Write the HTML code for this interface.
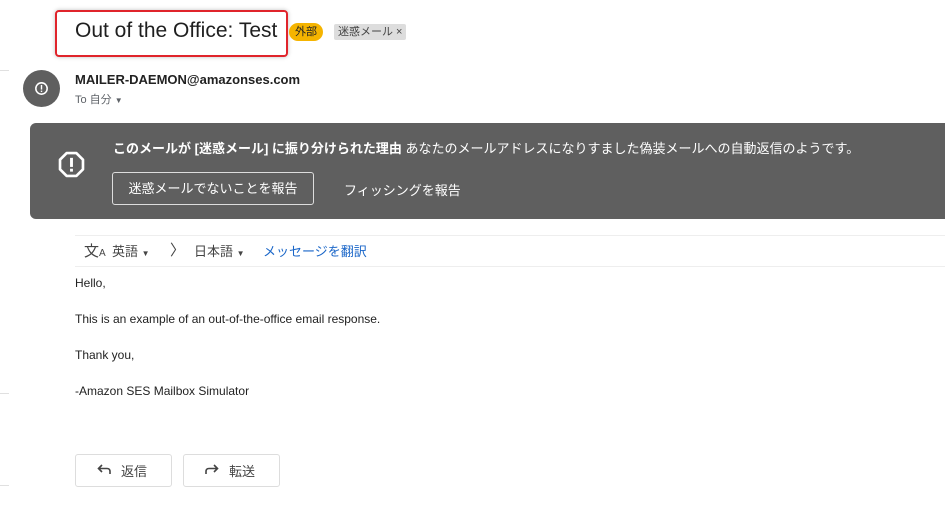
<!DOCTYPE html>
<html><head><meta charset="utf-8"><style>
body{margin:0;width:945px;height:508px;background:#fff;position:relative;overflow:hidden;font-family:"Liberation Sans","Noto Sans CJK JP",sans-serif;color:#222}
.a{position:absolute;white-space:nowrap}
.ln{position:absolute;left:0;width:9px;height:1px;background:#e0e0e0}
</style></head><body>
<div class="a" style="left:55px;top:10px;width:229px;height:43px;border:2px solid #e0242b;border-radius:4px;box-shadow:0 0 4px rgba(0,0,0,.25)"></div>
<div class="a" style="left:75px;top:19px;font-size:21px;color:#1f1f1f">Out of the Office: Test</div>
<div class="a" style="left:289px;top:23px;height:18px;padding:0 6px;border-radius:9px;background:#f5b400;font-size:11px;line-height:18px;color:#222">外部</div>
<div class="a" style="left:334px;top:24px;height:16px;padding:0 4px;border-radius:2px;background:#ddd;font-size:11px;line-height:16px;color:#444">迷惑メール ×</div>
<div class="ln" style="top:70px"></div><div class="ln" style="top:393px"></div><div class="ln" style="top:485px"></div>
<div class="a" style="left:23px;top:70px;width:37px;height:37px;border-radius:50%;background:#5f5f5f"></div>
<svg class="a" style="left:33px;top:80px" width="17" height="17" viewBox="0 0 24 24"><circle cx="12" cy="12" r="8" fill="none" stroke="#fff" stroke-width="2.2"/><rect x="11" y="7" width="2" height="6.5" fill="#fff"/><rect x="11" y="15" width="2" height="2" fill="#fff"/></svg>
<div class="a" style="left:75px;top:72px;font-size:13px;font-weight:bold;color:#222">MAILER-DAEMON@amazonses.com</div>
<div class="a" style="left:75px;top:91px;font-size:11px;color:#5f6368">To 自分 <span style="font-size:8px">▼</span></div>
<div class="a" style="left:30px;top:123px;width:930px;height:96px;background:#5f5f5f;border-radius:6px"></div>
<svg class="a" style="left:57px;top:150px" width="29" height="29" viewBox="0 0 24 24"><path d="M8 2.5h8l5.5 5.5v8L16 21.5H8L2.5 16V8z" fill="none" stroke="#fff" stroke-width="2.2" stroke-linejoin="round"/><rect x="10.8" y="6.5" width="2.4" height="7.5" fill="#fff"/><rect x="10.8" y="15.5" width="2.4" height="2.4" fill="#fff"/></svg>
<div class="a" style="left:113px;top:138px;font-size:13px;color:#fff"><b>このメールが [迷惑メール] に振り分けられた理由</b> あなたのメールアドレスになりすました偽装メールへの自動返信のようです。</div>
<div class="a" style="left:112px;top:172px;width:200px;height:31px;border:1px solid #ddd;border-radius:3px;font-size:13px;color:#fff;line-height:31px;text-align:center">迷惑メールでないことを報告</div>
<div class="a" style="left:344px;top:180px;font-size:13px;color:#fff">フィッシングを報告</div>
<div class="a" style="left:75px;top:235px;width:870px;height:1px;background:#eee"></div>
<div class="a" style="left:75px;top:266px;width:870px;height:1px;background:#eee"></div>
<div class="a" style="left:84px;top:240px;font-size:15px;color:#444">文<span style="font-size:10px">A</span></div>
<div class="a" style="left:112px;top:241px;font-size:13px;color:#444">英語 <span style="font-size:8px">▼</span></div>
<div class="a" style="left:170px;top:239px;font-size:15px;color:#444">〉</div>
<div class="a" style="left:194px;top:241px;font-size:13px;color:#444">日本語 <span style="font-size:8px">▼</span></div>
<div class="a" style="left:263px;top:241px;font-size:13px;color:#1a66c8">メッセージを翻訳</div>
<div class="a" style="left:75px;top:276px;font-size:12px">Hello,</div>
<div class="a" style="left:75px;top:312px;font-size:12px">This is an example of an out-of-the-office email response.</div>
<div class="a" style="left:75px;top:348px;font-size:12px">Thank you,</div>
<div class="a" style="left:75px;top:384px;font-size:12px">-Amazon SES Mailbox Simulator</div>
<div class="a" style="left:75px;top:454px;width:95px;height:31px;border:1px solid #ddd;border-radius:3px"></div>
<div class="a" style="left:183px;top:454px;width:95px;height:31px;border:1px solid #ddd;border-radius:3px"></div>
<svg class="a" style="left:97px;top:463px" width="15" height="13" viewBox="0 0 15 13"><path d="M5 2L1.5 5.5 5 9M1.5 5.5H10q3 0 3 3V11" fill="none" stroke="#444" stroke-width="1.6"/></svg>
<div class="a" style="left:121px;top:461px;font-size:13px;color:#444">返信</div>
<svg class="a" style="left:204px;top:463px" width="15" height="13" viewBox="0 0 15 13"><path d="M10 2l3.5 3.5L10 9M13.5 5.5H5q-3 0-3 3V11" fill="none" stroke="#444" stroke-width="1.6"/></svg>
<div class="a" style="left:229px;top:461px;font-size:13px;color:#444">転送</div>
</body></html>
